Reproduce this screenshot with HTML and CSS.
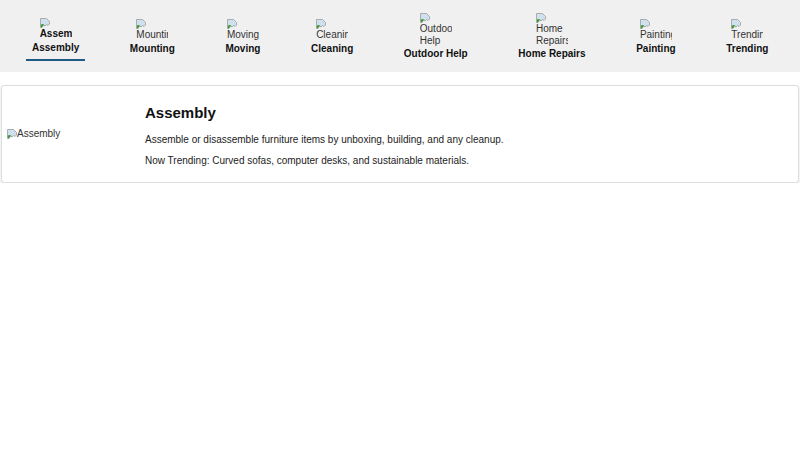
FILE: index.html
```html
<!DOCTYPE html>
<html lang="en">
<head>
<meta charset="utf-8">
<title>Services</title>
<link rel="stylesheet" href="styles.css">
</head>
<body>
<nav class="nav">
  <a class="nav-item active">
    <span class="thumb"><svg class="broken" viewBox="0 0 10 10"><path d="M0.5 0.5H6.5L9.5 3.5V6L8 7.5L6.5 6.5L5 8L3.5 7L2 9.5H0.5Z" fill="#cfe0ee" stroke="#9a9a9a" stroke-width="0.8"/><path d="M0.9 9.2V6.6Q3 4.8 5 7.6L3.5 7L2 9.2Z" fill="#3f9a35"/></svg><span class="alt">Assembly</span></span>
    <span class="label">Assembly</span>
  </a>
  <a class="nav-item">
    <span class="thumb"><svg class="broken" viewBox="0 0 10 10"><path d="M0.5 0.5H6.5L9.5 3.5V6L8 7.5L6.5 6.5L5 8L3.5 7L2 9.5H0.5Z" fill="#cfe0ee" stroke="#9a9a9a" stroke-width="0.8"/><path d="M0.9 9.2V6.6Q3 4.8 5 7.6L3.5 7L2 9.2Z" fill="#3f9a35"/></svg><span class="alt">Mounting</span></span>
    <span class="label">Mounting</span>
  </a>
  <a class="nav-item">
    <span class="thumb"><svg class="broken" viewBox="0 0 10 10"><path d="M0.5 0.5H6.5L9.5 3.5V6L8 7.5L6.5 6.5L5 8L3.5 7L2 9.5H0.5Z" fill="#cfe0ee" stroke="#9a9a9a" stroke-width="0.8"/><path d="M0.9 9.2V6.6Q3 4.8 5 7.6L3.5 7L2 9.2Z" fill="#3f9a35"/></svg><span class="alt">Moving</span></span>
    <span class="label">Moving</span>
  </a>
  <a class="nav-item">
    <span class="thumb"><svg class="broken" viewBox="0 0 10 10"><path d="M0.5 0.5H6.5L9.5 3.5V6L8 7.5L6.5 6.5L5 8L3.5 7L2 9.5H0.5Z" fill="#cfe0ee" stroke="#9a9a9a" stroke-width="0.8"/><path d="M0.9 9.2V6.6Q3 4.8 5 7.6L3.5 7L2 9.2Z" fill="#3f9a35"/></svg><span class="alt">Cleaning</span></span>
    <span class="label">Cleaning</span>
  </a>
  <a class="nav-item">
    <span class="thumb"><svg class="broken" viewBox="0 0 10 10"><path d="M0.5 0.5H6.5L9.5 3.5V6L8 7.5L6.5 6.5L5 8L3.5 7L2 9.5H0.5Z" fill="#cfe0ee" stroke="#9a9a9a" stroke-width="0.8"/><path d="M0.9 9.2V6.6Q3 4.8 5 7.6L3.5 7L2 9.2Z" fill="#3f9a35"/></svg><span class="alt">Outdoor Help</span></span>
    <span class="label">Outdoor Help</span>
  </a>
  <a class="nav-item">
    <span class="thumb"><svg class="broken" viewBox="0 0 10 10"><path d="M0.5 0.5H6.5L9.5 3.5V6L8 7.5L6.5 6.5L5 8L3.5 7L2 9.5H0.5Z" fill="#cfe0ee" stroke="#9a9a9a" stroke-width="0.8"/><path d="M0.9 9.2V6.6Q3 4.8 5 7.6L3.5 7L2 9.2Z" fill="#3f9a35"/></svg><span class="alt">Home Repairs</span></span>
    <span class="label">Home Repairs</span>
  </a>
  <a class="nav-item">
    <span class="thumb"><svg class="broken" viewBox="0 0 10 10"><path d="M0.5 0.5H6.5L9.5 3.5V6L8 7.5L6.5 6.5L5 8L3.5 7L2 9.5H0.5Z" fill="#cfe0ee" stroke="#9a9a9a" stroke-width="0.8"/><path d="M0.9 9.2V6.6Q3 4.8 5 7.6L3.5 7L2 9.2Z" fill="#3f9a35"/></svg><span class="alt">Painting</span></span>
    <span class="label">Painting</span>
  </a>
  <a class="nav-item">
    <span class="thumb"><svg class="broken" viewBox="0 0 10 10"><path d="M0.5 0.5H6.5L9.5 3.5V6L8 7.5L6.5 6.5L5 8L3.5 7L2 9.5H0.5Z" fill="#cfe0ee" stroke="#9a9a9a" stroke-width="0.8"/><path d="M0.9 9.2V6.6Q3 4.8 5 7.6L3.5 7L2 9.2Z" fill="#3f9a35"/></svg><span class="alt">Trending</span></span>
    <span class="label">Trending</span>
  </a>
</nav>

<section class="card">
  <div class="card-img"><svg class="broken" viewBox="0 0 10 10"><path d="M0.5 0.5H6.5L9.5 3.5V6L8 7.5L6.5 6.5L5 8L3.5 7L2 9.5H0.5Z" fill="#cfe0ee" stroke="#9a9a9a" stroke-width="0.8"/><path d="M0.9 9.2V6.6Q3 4.8 5 7.6L3.5 7L2 9.2Z" fill="#3f9a35"/></svg><span class="alt">Assembly</span></div>
  <div class="card-body">
    <h2 class="card-title">Assembly</h2>
    <p class="card-text">Assemble or disassemble furniture items by unboxing, building, and any cleanup.</p>
    <p class="card-text">Now Trending: Curved sofas, computer desks, and sustainable materials.</p>
  </div>
</section>
</body>
</html>
```

FILE: styles.css
```css
html, body {
  margin: 0;
  padding: 0;
  background: #ffffff;
  font-family: "Liberation Sans", Arial, sans-serif;
  color: #111;
}

.nav {
  display: flex;
  align-items: center;
  gap: 38.6px;
  height: 65px;
  padding: 7px 0 0 26px;
  background: #f0f0f0;
}

.nav-item {
  display: flex;
  flex-direction: column;
  align-items: center;
  padding: 0 6px 6px;
  text-decoration: none;
  color: #111;
}

.nav-item.active {
  border-bottom: 2px solid #1f5a85;
}

.thumb {
  display: block;
  width: 32px;
  overflow: hidden;
  font-size: 10px;
  line-height: 11.5px;
  color: #333;
  text-align: left;
  margin-bottom: 2px;
}

.thumb .broken {
  display: block;
  width: 10px;
  height: 10px;
}

.thumb .alt {
  display: block;
  width: 32px;
}

.nav-item.active .thumb {
  color: #111;
  font-weight: bold;
}

.label {
  display: block;
  font-size: 10px;
  line-height: 11.5px;
  font-weight: bold;
  white-space: nowrap;
}

.card {
  display: flex;
  align-items: center;
  margin: 13px 1px 0;
  padding: 0 6px 0 5px;
  border: 1px solid #dedede;
  border-radius: 3px;
  box-shadow: 0 1px 3px rgba(0, 0, 0, 0.12);
  background: #fff;
}

.card-img {
  flex: 0 0 126px;
  margin-right: 12px;
  display: flex;
  align-items: center;
  font-size: 10px;
  color: #333;
}

.card-img .broken {
  width: 10px;
  height: 10px;
  flex: none;
}

.card-body {
  padding: 6px 0 6px;
}

.card-title {
  font-size: 15px;
  font-weight: bold;
  margin: 12px 0 12.5px;
  color: #111;
}

.card-text {
  font-size: 10px;
  margin: 10px 0;
  color: #222;
}
```
